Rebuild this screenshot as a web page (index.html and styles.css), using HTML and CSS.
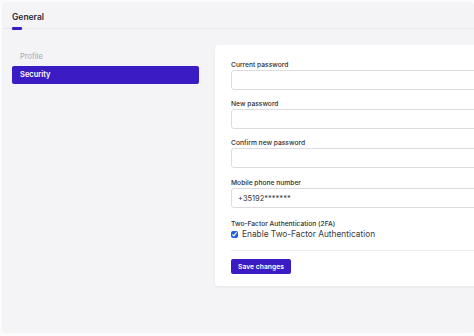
FILE: index.html
```html
<!DOCTYPE html>
<html lang="en">

<head>
    <meta charset="UTF-8">
    <meta name="viewport" content="width=device-width, initial-scale=1.0">
    <title>Settings - Security</title>
    <link rel="stylesheet" href="styles.css">
</head>

<body>
    <div class="settings">
        <div class="tabs">
            <div class="tab active">General</div>
        </div>
        <div class="settings-body">
            <nav class="side-nav">
                <a href="#" class="side-item">Profile</a>
                <a href="#" class="side-item active">Security</a>
            </nav>
            <form class="card">
                <div class="field">
                    <label>Current password</label>
                    <input type="password">
                </div>
                <div class="field">
                    <label>New password</label>
                    <input type="password">
                </div>
                <div class="field">
                    <label>Confirm new password</label>
                    <input type="password">
                </div>
                <div class="field">
                    <label>Mobile phone number</label>
                    <input type="text" value="+35192*******">
                </div>
                <div class="field twofa">
                    <label>Two-Factor Authentication (2FA)</label>
                    <div class="check-row">
                        <input type="checkbox" id="twofa" checked>
                        <span>Enable Two-Factor Authentication</span>
                    </div>
                </div>
                <div class="actions">
                    <button type="button" class="btn-primary">Save changes</button>
                </div>
            </form>
        </div>
    </div>
</body>

</html>
```

FILE: styles.css
```css
body {
    font-family: 'Inter', 'Liberation Sans', sans-serif;
    background-color: #fbfbfc;
    color: #333;
    margin: 0;
    padding: 0;
}

.settings {
    margin: 2px 0 3px 2px;
    height: 331px;
    background-color: #f4f4f6;
    border-radius: 3px;
    overflow: hidden;
}

.tabs {
    display: flex;
    padding: 0 10px;
    border-bottom: 1px solid #e8e8ec;
}

.tab {
    font-size: 8.5px;
    font-weight: 600;
    line-height: 10px;
    color: #2b2b33;
    padding: 10px 0 6px;
    position: relative;
}

.tab.active::after {
    content: '';
    position: absolute;
    left: 0;
    bottom: -2px;
    width: 10px;
    height: 3px;
    border-radius: 1px;
    background-color: #3b1cc4;
}

.settings-body {
    display: flex;
    gap: 16px;
    padding: 16px 0 0 10px;
}

.side-nav {
    width: 187px;
    flex-shrink: 0;
    display: flex;
    flex-direction: column;
    gap: 1px;
    padding-top: 2px;
}

.side-item {
    display: block;
    height: 18px;
    line-height: 18px;
    padding: 0 8px;
    font-size: 7.5px;
    color: #a8a8ae;
    text-decoration: none;
    border-radius: 2px;
}

.side-item:first-child {
    line-height: 20px;
}

.side-item.active {
    background-color: #3b1cc4;
    color: white;
    font-weight: 600;
}

.card {
    width: 300px;
    flex-shrink: 0;
    background-color: white;
    border-radius: 3px;
    box-shadow: 0px 1px 3px rgba(0, 0, 0, 0.06);
    padding: 16px 16px 12px;
    font-size: 8px;
}

.field {
    margin-bottom: 10px;
}

.field label {
    display: block;
    font-size: 6.7px;
    font-weight: 500;
    line-height: 9px;
    color: #2e2e33;
    margin-bottom: 0;
}

.field input[type="password"],
.field input[type="text"] {
    display: block;
    box-sizing: border-box;
    width: 100%;
    height: 20px;
    margin: 0;
    border: 1px solid #dcdce0;
    border-radius: 3px;
    padding: 0 6px;
    font-family: 'Inter', 'Liberation Sans', sans-serif;
    font-size: 7.5px;
    color: #333;
    outline: none;
}

.field:nth-child(4) {
    padding-top: 1px;
}

.twofa {
    padding-top: 2px;
    margin-bottom: 0;
}

.check-row {
    display: flex;
    align-items: center;
    gap: 4px;
    font-size: 8.3px;
    color: #3a3a40;
    line-height: 10px;
}

.check-row input {
    width: 7px;
    height: 7px;
    margin: 0;
    accent-color: #1e5fd8;
}

.actions {
    margin-top: 11px;
    padding-top: 8px;
    border-top: 1px solid #ececef;
}

.btn-primary {
    display: block;
    height: 15px;
    padding: 0 7px;
    border: none;
    border-radius: 2px;
    background-color: #3b1cc4;
    color: white;
    font-family: 'Inter', 'Liberation Sans', sans-serif;
    font-size: 6.8px;
    font-weight: 600;
}
```
